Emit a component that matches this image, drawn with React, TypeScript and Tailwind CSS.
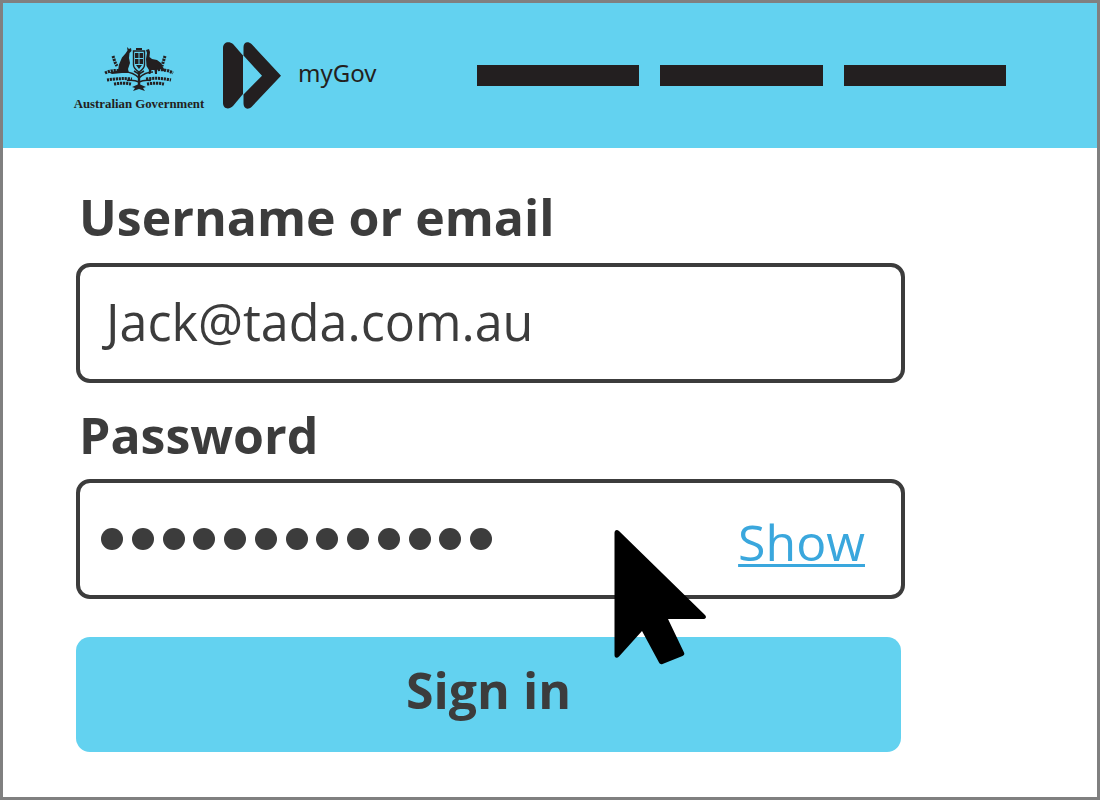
import React from "react";

const sans = "font-['Open_Sans',sans-serif]";

function Crest() {
  return (
    <svg width="70" height="48" viewBox="0 0 70 48" className="text-[#231f20]" fill="currentColor">
      {/* kangaroo */}
      <path d="M23 1l2 2 2-1 .5 3-2 2-.5 5 1 5-2 6 1 4-7 0-10 1-3-1.500 9-2 1-6 3-7 3.500-4 2-3z" />
      {/* emu */}
      <path d="M42 4l3-1 1 3-.5 5 2.500 2 5 1 4 3 3 6 1 3-5-3-3 1v4l-2 0-.5-4-3 0-1 4-2 0 .5-4-2.500-4-.5-7 1-6z" />
      {/* shield */}
      <path d="M29.500 5h11v14c0 3-2.500 5-5.500 7-3-2-5.500-4-5.500-7z" fill="none" stroke="currentColor" strokeWidth="1.400" />
      <path d="M31 7h3.500v5h-3.500zM35.500 7h3.500v5h-3.500zM31 13h3.500v5h-3.500zM35.500 13h3.500v5h-3.500zM32 19h6l-3 4z" />
      <path d="M32 2h6v2h-6z" />
      {/* tree */}
      <path d="M35 25v15" fill="none" stroke="currentColor" strokeWidth="2.400" />
      <path
        d="M35 32c-4-4-8-6-14-6M35 32c4-4 8-6 14-6M35 36c-4-2-8-2-12-1.500M35 36c4-2 8-2 12-1.500M35 28l-5-3M35 28l5-3"
        fill="none"
        stroke="currentColor"
        strokeWidth="1.500"
      />
      {/* wattle */}
      <g fill="none" stroke="currentColor" strokeWidth="3" strokeDasharray="2.200 .8">
        <path d="M1 27c6-3 12-3 18-2" />
        <path d="M51 24c6-1 13 0 18 3" />
        <path d="M3 34c7-1 15-2 25-1" />
        <path d="M42 33c9-1 16-1 25 1" />
        <path d="M10 38c6-1 12-1 17 0" />
        <path d="M43 38c6-1 12-1 17 0" />
        <path d="M9 10c1 3 2 7 4 10" />
        <path d="M61 10c-1 3-2 7-3 10" />
      </g>
      {/* base */}
      <path d="M28 41l7-3 7 3-3 1 2 3-6-2-6 2 2-3z" />
    </svg>
  );
}

function MyGovMark() {
  return (
    <svg width="58" height="67" viewBox="0 0 58 67" className="text-[#231f20]" fill="currentColor">
      <path d="M0 6C0 0 6-1 10 2L20 13.500V52L10 64C6 68 0 67 0 61z" />
      <path d="M20.500 5C20.500 0 25-1 28.500 2L58 33.700 28.500 65C25 68 20.500 67 20.500 61V52.500L39 33.700 20.500 13.500z" />
    </svg>
  );
}

function Cursor() {
  return (
    <svg width="96" height="138" viewBox="0 0 96 138" fill="#000" className="absolute left-[608px] top-[524px]">
      <path d="M3.500 6V128c0 3 2.500 3.500 4.500 1.500L31 104l17 31.500c.8 1.500 2 2 3.500 1.500l20-8c1.800-.8 2.200-2 1.500-3.500L57 92h35c3 0 3.800-2 2-4L8 4c-2-2-4.500-1-4.500 2z" />
    </svg>
  );
}

export default function App() {
  const dots = Array.from({ length: 13 });
  return (
    <div className={`relative w-[1100px] h-[800px] border-[3px] border-[#808080] bg-white text-[#3c3c3c] ${sans}`}>
      {/* Header */}
      <div className="h-[145px] bg-[#63d2f0] flex items-center pl-[70px]">
        <div className="w-[132px] flex flex-col items-center mt-[5px]">
          <Crest />
          <span className="font-['Liberation_Serif',serif] font-bold text-[12.800px] leading-[14px] text-[#231f20] whitespace-nowrap mt-[3px]">
            Australian Government
          </span>
        </div>
        <div className="ml-[18px]">
          <MyGovMark />
        </div>
        <span className="ml-[17px] text-[24px] text-[#231f20] font-['Noto_Sans',sans-serif] mt-[-5px]">myGov</span>
        <div className="ml-[101px] flex gap-[21px] mt-[-1px]">
          <div className="w-[162px] h-[21px] bg-[#231f20]" />
          <div className="w-[163px] h-[21px] bg-[#231f20]" />
          <div className="w-[162px] h-[21px] bg-[#231f20]" />
        </div>
      </div>

      {/* Form */}
      <div className="pl-[73px] pt-[36px] w-[902px]">
        <div className="pl-[3px] text-[50px] leading-[66px] font-bold h-[66px] whitespace-nowrap">Username or email</div>
        <div className="mt-[13px] h-[120px] border-4 border-[#3c3c3c] rounded-[14px] flex items-center pl-[26px] pb-[3px] text-[50.250px] font-normal">
          Jack@tada.com.au
        </div>
        <div className="mt-[19px] pl-[3px] text-[50px] leading-[66px] font-bold h-[66px]">Password</div>
        <div className="mt-[11px] h-[120px] border-4 border-[#3c3c3c] rounded-[14px] flex items-center justify-between pl-[21px] pr-[36px]">
          <div className="flex gap-[8.750px] mt-[-1px]">
            {dots.map((_, i) => (
              <div key={i} className="w-[22px] h-[22px] rounded-full bg-[#3c3c3c]" />
            ))}
          </div>
          <span className="text-[50px] font-normal text-[#3aa7dd] underline decoration-[3px] underline-offset-[3px] mt-[7px]">
            Show
          </span>
        </div>
        <div className="mt-[38px] w-[825px] h-[115px] rounded-[14px] bg-[#63d2f0] flex items-center justify-center pb-[8px] text-[50px] font-bold">
          Sign in
        </div>
      </div>

      <Cursor />
    </div>
  );
}
